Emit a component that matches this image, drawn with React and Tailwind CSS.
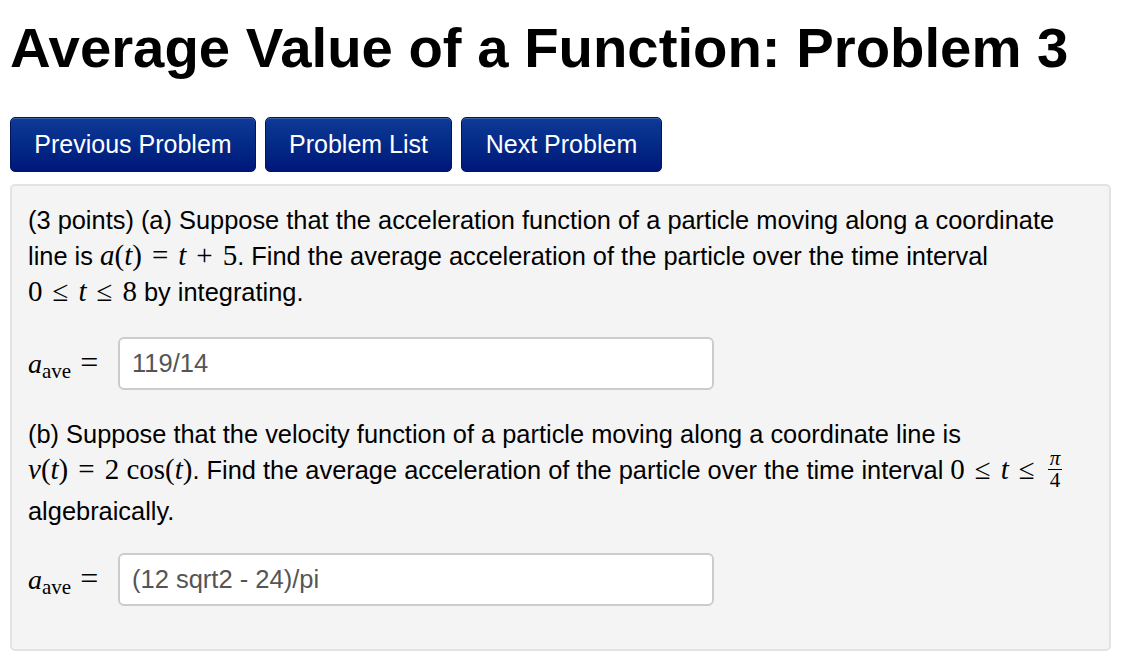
import React from 'react';

const sans = { fontFamily: '"Liberation Sans", Arial, Helvetica, sans-serif' };

function M({ children }) {
  // inline math, serif like MathJax output
  return (
    <span className="font-['Liberation_Serif',serif] text-[29px] leading-none whitespace-nowrap">{children}</span>
  );
}

function I({ children }) {
  return <span className="italic">{children}</span>;
}

function Op({ children }) {
  return <span className="mx-[10px]">{children}</span>;
}

function Frac({ num, den }) {
  return (
    <span className="inline-flex flex-col items-center align-middle ml-[3px] text-[21px] leading-[19px] -translate-y-[3px]">
      <span className="italic px-[2px] pb-[1px] border-b border-black">{num}</span>
      <span className="pt-[1px]">{den}</span>
    </span>
  );
}

function AveLabel() {
  return (
    <span className="font-['Liberation_Serif',serif] text-[28px] whitespace-nowrap w-[90px] shrink-0">
      <I>a</I>
      <span className="text-[21px] relative top-[5px]">ave</span>
      <span className="ml-[9px] text-[32px]">=</span>
    </span>
  );
}

function AnswerRow({ value }) {
  return (
    <div className="flex items-center">
      <AveLabel />
      <input
        readOnly
        value={value}
        className="w-[596px] h-[53px] bg-white border-2 border-[#cccccc] rounded-[6px] px-[12px] text-[25.5px] text-[#555555] outline-none"
        style={sans}
      />
    </div>
  );
}

function NavButton({ children, w }) {
  return (
    <button
      className={`h-[55px] ${w} rounded-[5px] text-white text-[25px] bg-gradient-to-b from-[#0f3a96] to-[#00177a] border border-[#00155e] shadow-[inset_0_1px_0_rgba(255,255,255,0.2)]`}
    >
      {children}
    </button>
  );
}

export default function App() {
  return (
    <div className="bg-white min-h-[658px] px-[10px] text-black" style={sans}>
      <h1 className="text-[56.3px] font-bold leading-[64px] pt-[16px] whitespace-nowrap">
        Average Value of a Function: Problem 3
      </h1>

      <div className="flex gap-[9px] mt-[37px]">
        <NavButton w="w-[246px]">Previous Problem</NavButton>
        <NavButton w="w-[187px]">Problem List</NavButton>
        <NavButton w="w-[201px]">Next Problem</NavButton>
      </div>

      <div className="mt-[12px] w-[1101px] h-[467px] bg-[#f4f4f4] border-2 border-[#e3e3e3] rounded-[5px] pl-[16px] pt-[16px] text-[25.4px] leading-[36px]">
        <p>
          (3 points) (a) Suppose that the acceleration function of a particle moving along a coordinate
          <br />
          line is{' '}
          <M>
            <I>a</I>(<I>t</I>)<Op>=</Op><I>t</I><Op>+</Op>5
          </M>
          . Find the average acceleration of the particle over the time interval
          <br />
          <M>
            0<Op>≤</Op><I>t</I><Op>≤</Op>8
          </M>{' '}
          by integrating.
        </p>

        <div className="mt-[27px]">
          <AnswerRow value="119/14" />
        </div>

        <p className="mt-[26px]">
          (b) Suppose that the velocity function of a particle moving along a coordinate line is
          <br />
          <M>
            <I>v</I>(<I>t</I>)<Op>=</Op>2 cos(<I>t</I>)
          </M>
          . Find the average acceleration of the particle over the time interval{' '}
          <M>
            0<Op>≤</Op><I>t</I><Op>≤</Op>
            <Frac num="π" den="4" />
          </M>
          <br />
          algebraically.
        </p>

        <div className="mt-[24px]">
          <AnswerRow value="(12 sqrt2 - 24)/pi" />
        </div>
      </div>
    </div>
  );
}
